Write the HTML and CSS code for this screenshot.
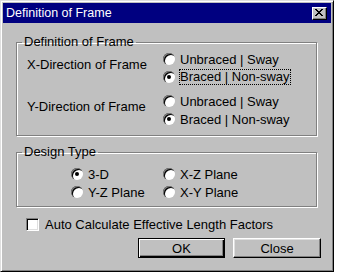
FILE: index.html
```html
<!DOCTYPE html>
<html lang="en">
<head>
  <meta charset="UTF-8" />
  <title>Definition of Frame</title>
  <link rel="stylesheet" href="styles.css">
</head>
<body>
  <div class="dialog">
    <div class="titlebar">
      <span class="title">Definition of Frame</span>
      <span class="close-btn">
        <svg width="8" height="7" viewBox="0 0 8 7">
          <path d="M0 0h2v1h1v1h2v-1h1v-1h2v1h-1v1h-1v1h-1v1h1v1h1v1h1v1h-2v-1h-1v-1h-2v1h-1v1h-2v-1h1v-1h1v-1h1v-1h-1v-1h-1v-1h-1z" fill="#000"/>
        </svg>
      </span>
    </div>

    <div class="content">
      <fieldset class="group group-frame">
        <legend>Definition of Frame</legend>
        <div class="dir-row">
          <div class="dir-label">X-Direction of Frame</div>
          <div class="options">
            <label class="opt"><span class="radio"></span><span>Unbraced | Sway</span></label>
            <label class="opt"><span class="radio checked"></span><span class="focus">Braced | Non-sway</span></label>
          </div>
        </div>
        <div class="dir-row">
          <div class="dir-label">Y-Direction of Frame</div>
          <div class="options">
            <label class="opt"><span class="radio"></span><span>Unbraced | Sway</span></label>
            <label class="opt"><span class="radio checked"></span><span>Braced | Non-sway</span></label>
          </div>
        </div>
      </fieldset>

      <fieldset class="group group-type">
        <legend>Design Type</legend>
        <div class="type-grid">
          <label class="opt"><span class="radio checked"></span><span>3-D</span></label>
          <label class="opt"><span class="radio"></span><span>X-Z Plane</span></label>
          <label class="opt"><span class="radio"></span><span>Y-Z Plane</span></label>
          <label class="opt"><span class="radio"></span><span>X-Y Plane</span></label>
        </div>
      </fieldset>

      <label class="check-row"><span class="checkbox"></span><span>Auto Calculate Effective Length Factors</span></label>

      <div class="buttons">
        <button class="btn btn-default">OK</button>
        <button class="btn">Close</button>
      </div>
    </div>
  </div>
</body>
</html>
```

FILE: styles.css
```css
body {
  margin: 0;
  background-color: #fff;
  font-family: "Liberation Sans", Arial, sans-serif;
  font-size: 13px;
  color: #000;
}

.dialog {
  box-sizing: border-box;
  width: 334px;
  height: 272px;
  padding: 2px;
  background-color: #c0c0c0;
  border: 1px solid;
  border-color: #dfdfdf #000 #000 #dfdfdf;
  box-shadow: inset 1px 1px 0 #fff, inset -1px -1px 0 #808080;
}

.titlebar {
  height: 20px;
  background-color: #000080;
  color: #fff;
  display: flex;
  align-items: center;
  justify-content: space-between;
  padding: 0 4px 0 3px;
}

.title {
  font-size: 12.5px;
  line-height: 20px;
}

.close-btn {
  box-sizing: border-box;
  width: 15px;
  height: 13px;
  background-color: #c0c0c0;
  border: 1px solid;
  border-color: #fff #000 #000 #fff;
  box-shadow: inset -1px -1px 0 #808080;
  display: flex;
  align-items: center;
  justify-content: center;
  padding: 0 1px 1px 0;
}

.close-btn svg {
  display: block;
}

.group {
  box-sizing: border-box;
  margin: 0 0 0 13px;
  width: 301px;
  padding-left: 10px;
  border: 1px solid #808080;
  box-shadow: 1px 1px 0 #fff, inset 1px 1px 0 #fff;
}

.group legend {
  line-height: 14px;
  padding: 0 2px;
  margin-left: -5px;
}

.group-frame {
  margin-top: 12px;
  height: 101px;
  padding-top: 1px;
}

.group-type {
  margin-top: 9px;
  height: 62px;
  padding-top: 6px;
}

.dir-row {
  display: flex;
}

.dir-row + .dir-row {
  margin-top: 6px;
}

.dir-label {
  width: 136px;
  line-height: 18px;
  padding-top: 6px;
}

.opt {
  display: flex;
  align-items: center;
  height: 18px;
  gap: 5px;
}

.radio {
  position: relative;
  width: 12px;
  height: 12px;
  border-radius: 50%;
  background-color: #fff;
  box-shadow: inset 1px 1px 0 #808080, inset 2px 2px 0 #000;
  flex: none;
}

.radio.checked::after {
  content: "";
  position: absolute;
  left: 4px;
  top: 4px;
  width: 4px;
  height: 4px;
  border-radius: 50%;
  background-color: #000;
}

.focus {
  outline: 1px dotted #000;
  outline-offset: 0;
  line-height: 14px;
}

.type-grid {
  display: grid;
  grid-template-columns: 92px 92px;
  margin-left: 44px;
}

.check-row {
  display: flex;
  align-items: center;
  gap: 6px;
  height: 18px;
  margin: 8px 0 0 23px;
}

.checkbox {
  box-sizing: border-box;
  width: 13px;
  height: 13px;
  background-color: #fff;
  border: 1px solid;
  border-color: #808080 #fff #fff #808080;
  box-shadow: inset 1px 1px 0 #000, inset -1px -1px 0 #dfdfdf;
}

.buttons {
  display: flex;
  justify-content: flex-end;
  gap: 8px;
  margin: 5px 10px 0 0;
}

.btn {
  box-sizing: border-box;
  width: 88px;
  height: 20px;
  padding: 0;
  font-family: inherit;
  font-size: 13px;
  color: #000;
  background-color: #c0c0c0;
  border: 1px solid;
  border-color: #fff #000 #000 #fff;
  box-shadow: inset -1px -1px 0 #808080, inset 1px 1px 0 #dfdfdf;
}

.btn-default {
  width: 87px;
  border: 1px solid #000;
  box-shadow: inset 1px 1px 0 #fff, inset -1px -1px 0 #000, inset -2px -2px 0 #808080;
}
```
